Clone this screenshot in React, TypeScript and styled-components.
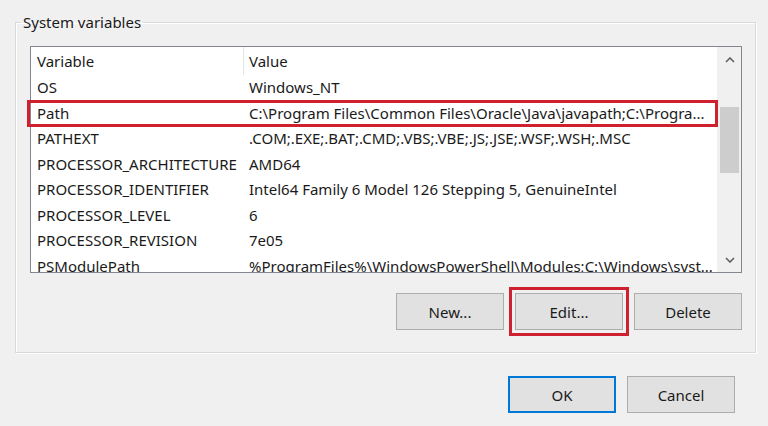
import styled, { createGlobalStyle } from "styled-components";

const GlobalStyle = createGlobalStyle`
  html, body {
    margin: 0;
    padding: 0;
    background: #f0f0f0;
  }
  body {
    font-family: "Segoe UI", "Noto Sans", "Open Sans", sans-serif;
    font-size: 14px;
    color: #1a1a1a;
  }
`;

const variables = [
  { name: "OS", value: "Windows_NT" },
  {
    name: "Path",
    value: "C:\\Program Files\\Common Files\\Oracle\\Java\\javapath;C:\\Progra...",
    marked: true,
  },
  { name: "PATHEXT", value: ".COM;.EXE;.BAT;.CMD;.VBS;.VBE;.JS;.JSE;.WSF;.WSH;.MSC" },
  { name: "PROCESSOR_ARCHITECTURE", value: "AMD64" },
  { name: "PROCESSOR_IDENTIFIER", value: "Intel64 Family 6 Model 126 Stepping 5, GenuineIntel" },
  { name: "PROCESSOR_LEVEL", value: "6" },
  { name: "PROCESSOR_REVISION", value: "7e05" },
  {
    name: "PSModulePath",
    value: "%ProgramFiles%\\WindowsPowerShell\\Modules;C:\\Windows\\syst...",
    clipped: true,
  },
];

const Chevron = ({ down }: { down?: boolean }) => (
  <svg width="10" height="6" viewBox="0 0 10 6">
    <path
      d={down ? "M1 1 L5 5 L9 1" : "M1 5 L5 1 L9 5"}
      fill="none"
      stroke="#606060"
      strokeWidth="1.6"
    />
  </svg>
);

const App = (): JSX.Element => {
  return (
    <Page>
      <GlobalStyle />
      <GroupBox>
        <Legend>System variables</Legend>
        <ListBox>
          <Table>
            <HeaderRow>
              <NameCell>Variable</NameCell>
              <ValueCell $divider>Value</ValueCell>
            </HeaderRow>
            {variables.map((v) => (
              <Row key={v.name} $marked={v.marked} $clipped={v.clipped}>
                <NameCell>{v.name}</NameCell>
                <ValueCell>{v.value}</ValueCell>
              </Row>
            ))}
          </Table>
          <ScrollBar>
            <ArrowButton>
              <Chevron />
            </ArrowButton>
            <Track>
              <Thumb />
            </Track>
            <ArrowButton>
              <Chevron down />
            </ArrowButton>
          </ScrollBar>
        </ListBox>
        <ButtonRow>
          <Button>New...</Button>
          <Button $marked>Edit...</Button>
          <Button>Delete</Button>
        </ButtonRow>
      </GroupBox>
      <DialogButtons>
        <Button $primary>OK</Button>
        <Button>Cancel</Button>
      </DialogButtons>
    </Page>
  );
};

export default App;

const Page = styled.div`
  width: 768px;
  height: 426px;
  padding-top: 12px;
  box-sizing: border-box;
  overflow: hidden;
`;

const GroupBox = styled.fieldset`
  margin: 0 0 0 15px;
  width: 741px;
  box-sizing: border-box;
  padding: 14px 15px 22px 14px;
  border: 1px solid #d9d9d9;
  border-radius: 0;
  box-shadow: 1px 1px 0 #ffffff, inset 1px 1px 0 #ffffff;
  min-inline-size: 0;
`;

const Legend = styled.legend`
  margin-left: -9px;
  padding: 0 2px;
  line-height: 20px;
  font-size: 15px;
  color: #1a1a1a;
`;

const ListBox = styled.div`
  display: flex;
  width: 712px;
  height: 227px;
  box-sizing: border-box;
  border: 1px solid #82878f;
  background: #ffffff;
`;

const Table = styled.div`
  flex: 1;
  min-width: 0;
  display: flex;
  flex-direction: column;
`;

const HeaderRow = styled.div`
  display: flex;
  height: 28px;
  line-height: 28px;
  font-size: 15px;
`;

const Row = styled.div<{ $marked?: boolean; $clipped?: boolean }>`
  position: relative;
  display: flex;
  flex: none;
  height: ${(p) => (p.$clipped ? "18px" : "25.5px")};
  line-height: 25.5px;
  font-size: 15px;
  overflow: ${(p) => (p.$clipped ? "hidden" : "visible")};

  &::after {
    content: "";
    display: ${(p) => (p.$marked ? "block" : "none")};
    position: absolute;
    top: -1px;
    bottom: -1px;
    left: -4px;
    right: -1px;
    border: 3px solid #cf2030;
    pointer-events: none;
  }
`;

const NameCell = styled.div`
  width: 212px;
  flex: none;
  padding-left: 6px;
  box-sizing: border-box;
  white-space: nowrap;
  overflow: hidden;
`;

const ValueCell = styled.div<{ $divider?: boolean }>`
  flex: 1;
  min-width: 0;
  padding-left: 5px;
  white-space: nowrap;
  overflow: hidden;
  border-left: 1px solid ${(p) => (p.$divider ? "#e5e5e5" : "transparent")};
`;

const ScrollBar = styled.div`
  width: 24px;
  flex: none;
  display: flex;
  flex-direction: column;
  background: #f0f0f0;
`;

const ArrowButton = styled.div`
  height: 25px;
  display: flex;
  align-items: center;
  justify-content: center;
  padding-left: 2px;
`;

const Track = styled.div`
  flex: 1;
  padding: 35px 2px 0 3px;
`;

const Thumb = styled.div`
  height: 66px;
  background: #cdcdcd;
`;

const ButtonRow = styled.div`
  display: flex;
  justify-content: flex-end;
  gap: 11px;
  width: 712px;
  margin-top: 20px;
`;

const Button = styled.button<{ $marked?: boolean; $primary?: boolean }>`
  width: 108px;
  height: 37px;
  box-sizing: border-box;
  background: #e1e1e1;
  border: 1px solid ${(p) => (p.$primary ? "#0078d7" : "#adadad")};
  box-shadow: ${(p) => (p.$primary ? "inset 0 0 0 1px #0078d7" : "none")};
  font-family: inherit;
  font-size: 15px;
  color: #1a1a1a;
  padding: 0;
  outline: ${(p) => (p.$marked ? "3px solid #cf2030" : "none")};
  outline-offset: 3px;
`;

const DialogButtons = styled.div`
  display: flex;
  justify-content: flex-end;
  gap: 11px;
  margin-top: 23px;
  padding-right: 33px;
`;
